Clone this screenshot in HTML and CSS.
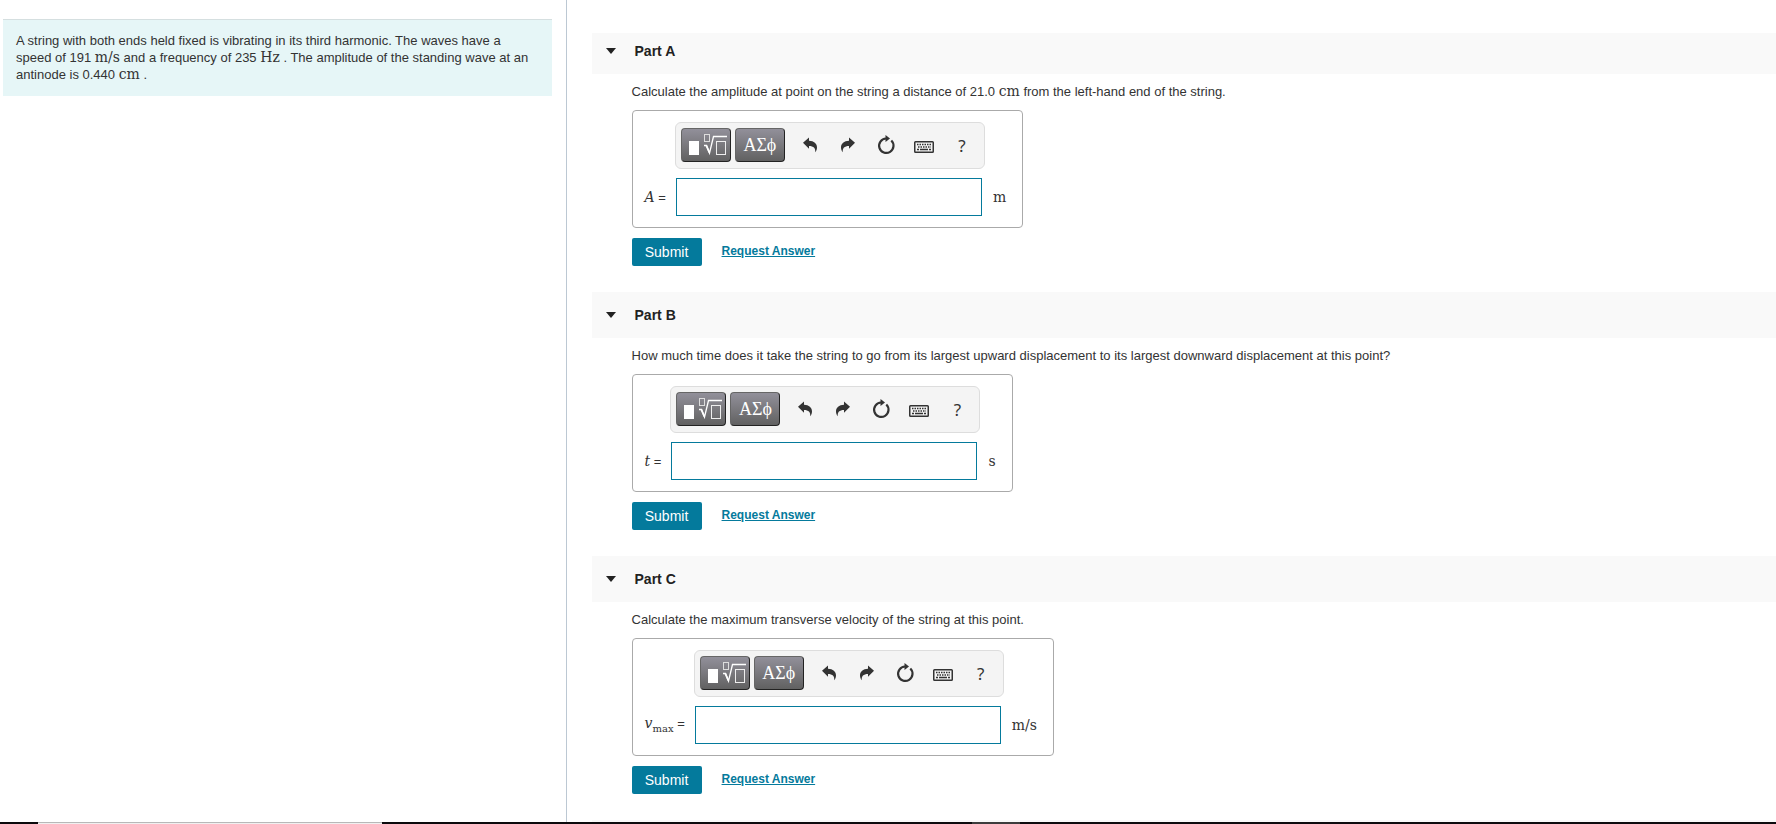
FILE: index.html
```
<!DOCTYPE html>
<html lang="en">
<head>
  <meta charset="UTF-8" />
  <title>Standing Wave on a String</title>
  <meta name="viewport" content="width=device-width, initial-scale=1.0" />
  <link rel="stylesheet" href="styles.css">
</head>
<body>
  <!-- shared toolbar icons -->
  <svg class="sprite" aria-hidden="true">
    <symbol id="icon-template" viewBox="0 0 38 22">
      <rect x="0" y="7" width="10" height="14" fill="#fff"/>
      <rect x="15.500" y="0.500" width="5" height="7" fill="none" stroke="#ddd"/>
      <path d="M15 11.500h2.500l3 7.500L24.500 2.500H38" fill="none" stroke="#fff" stroke-width="1.300"/>
      <path d="M17.300 11.500l3 7" stroke="#fff" stroke-width="1.800"/>
      <rect x="27.500" y="7.500" width="9" height="13" fill="none" stroke="#eee"/>
    </symbol>
    <symbol id="icon-undo" viewBox="0 0 20 20">
      <path d="M3 7.800L9 2.500v3.300c5 .2 8 2.700 8 6.700 0 1.800-.6 3.300-1.800 4.800.5-4.200-1.600-6.300-6.200-6.300v2.800z" fill="#333"/>
    </symbol>
    <symbol id="icon-redo" viewBox="0 0 20 20">
      <path d="M17 7.800L11 2.500v3.300c-5 .2-8 2.700-8 6.700 0 1.800.6 3.300 1.800 4.800-.5-4.200 1.600-6.300 6.200-6.300v2.800z" fill="#333"/>
    </symbol>
    <symbol id="icon-reset" viewBox="0 0 20 20">
      <path d="M15.300 5.500A7.200 7.200 0 1 1 10 3.500" fill="none" stroke="#333" stroke-width="2.200"/>
      <path d="M9.500 0L14 3.500 9.500 7z" fill="#333"/>
    </symbol>
    <symbol id="icon-keyboard" viewBox="0 0 20 20">
      <rect x="0.750" y="6.750" width="18.500" height="10.500" rx="0.800" fill="none" stroke="#333" stroke-width="1.500"/>
      <path d="M3 9.500h14M4 12h13" stroke="#333" stroke-width="1.500" stroke-dasharray="1.500 1"/>
      <path d="M3 14.500h2M6 14.500h8M15 14.500h2" stroke="#333" stroke-width="1.500"/>
    </symbol>
  </svg>

  <div class="page">
    <aside class="intro">
      <p class="problem">A string with both ends held fixed is vibrating in its third harmonic. The waves have a speed of 191 <span class="math">m/s</span> and a frequency of 235 <span class="math">Hz</span> . The amplitude of the standing wave at an antinode is 0.440 <span class="math">cm</span> .</p>
    </aside>

    <main class="parts">
      <section class="part">
        <h2 class="part-header"><button class="toggle" type="button"><span class="caret"></span>Part A</button></h2>
        <form class="part-body">
          <p class="prompt">Calculate the amplitude at point on the string a distance of 21.0 <span class="math">cm</span> from the left-hand end of the string.</p>
          <div class="answer">
            <div class="toolbar">
              <button class="key" type="button" aria-label="Templates"><svg class="template"><use href="#icon-template"/></svg></button>
              <button class="key" type="button">ΑΣϕ</button>
              <button class="tool" type="button" aria-label="Undo"><svg><use href="#icon-undo"/></svg></button>
              <button class="tool" type="button" aria-label="Redo"><svg><use href="#icon-redo"/></svg></button>
              <button class="tool" type="button" aria-label="Reset"><svg><use href="#icon-reset"/></svg></button>
              <button class="tool" type="button" aria-label="Keyboard shortcuts"><svg><use href="#icon-keyboard"/></svg></button>
              <button class="tool" type="button">?</button>
            </div>
            <label for="answer-a"><i class="math">A</i> =</label>
            <input type="text" id="answer-a">
            <span class="unit math">m</span>
          </div>
          <div class="actions">
            <button class="submit" type="submit">Submit</button>
            <a href="#">Request Answer</a>
          </div>
        </form>
      </section>

      <section class="part">
        <h2 class="part-header"><button class="toggle" type="button"><span class="caret"></span>Part B</button></h2>
        <form class="part-body">
          <p class="prompt">How much time does it take the string to go from its largest upward displacement to its largest downward displacement at this point?</p>
          <div class="answer">
            <div class="toolbar">
              <button class="key" type="button" aria-label="Templates"><svg class="template"><use href="#icon-template"/></svg></button>
              <button class="key" type="button">ΑΣϕ</button>
              <button class="tool" type="button" aria-label="Undo"><svg><use href="#icon-undo"/></svg></button>
              <button class="tool" type="button" aria-label="Redo"><svg><use href="#icon-redo"/></svg></button>
              <button class="tool" type="button" aria-label="Reset"><svg><use href="#icon-reset"/></svg></button>
              <button class="tool" type="button" aria-label="Keyboard shortcuts"><svg><use href="#icon-keyboard"/></svg></button>
              <button class="tool" type="button">?</button>
            </div>
            <label for="answer-b"><i class="math">t</i> =</label>
            <input type="text" id="answer-b">
            <span class="unit math">s</span>
          </div>
          <div class="actions">
            <button class="submit" type="submit">Submit</button>
            <a href="#">Request Answer</a>
          </div>
        </form>
      </section>

      <section class="part">
        <h2 class="part-header"><button class="toggle" type="button"><span class="caret"></span>Part C</button></h2>
        <form class="part-body">
          <p class="prompt">Calculate the maximum transverse velocity of the string at this point.</p>
          <div class="answer">
            <div class="toolbar">
              <button class="key" type="button" aria-label="Templates"><svg class="template"><use href="#icon-template"/></svg></button>
              <button class="key" type="button">ΑΣϕ</button>
              <button class="tool" type="button" aria-label="Undo"><svg><use href="#icon-undo"/></svg></button>
              <button class="tool" type="button" aria-label="Redo"><svg><use href="#icon-redo"/></svg></button>
              <button class="tool" type="button" aria-label="Reset"><svg><use href="#icon-reset"/></svg></button>
              <button class="tool" type="button" aria-label="Keyboard shortcuts"><svg><use href="#icon-keyboard"/></svg></button>
              <button class="tool" type="button">?</button>
            </div>
            <label for="answer-c"><i class="math">v</i><sub class="math">max</sub> =</label>
            <input type="text" id="answer-c">
            <span class="unit math">m/s</span>
          </div>
          <div class="actions">
            <button class="submit" type="submit">Submit</button>
            <a href="#">Request Answer</a>
          </div>
        </form>
      </section>

      <div class="part-header"></div>
    </main>
  </div>

  <div class="taskbar">
    <div class="start"></div>
    <div class="search"></div>
    <div class="apps"></div>
    <div class="active"></div>
  </div>
</body>
</html>
```
FILE: styles.css
```
* {
  box-sizing: border-box;
}
body {
  display: flex;
  flex-direction: column;
  height: 100vh;
  margin: 0;
  overflow: hidden;
  background: white;
  color: #333;
  font-family: "Liberation Sans", Arial, sans-serif;
  font-size: 13px;
}
button, input {
  font-family: inherit;
}
.sprite {
  display: none;
}
.page {
  display: flex;
  flex: 1;
  min-height: 0;
}

/* problem statement */
.intro {
  width: 31.9%;
  padding: 19px 14px 0 3px;
  border-right: 1px solid #bcc8d3;
}
.problem {
  margin: 0;
  padding: 12px 20px 13px 13px;
  border-top: 1px solid #d5dfe0;
  background: #e6f6f7;
  line-height: 17px;
}
.math {
  font-family: "DejaVu Serif", serif;
  font-size: 14px;
  line-height: 1;
}

/* parts */
.parts {
  flex: 1;
  padding: 33px 0 0 25px;
  overflow: hidden;
}
.part {
  margin-bottom: 26px;
}
.part-header {
  display: flex;
  align-items: center;
  height: 46px;
  margin: 0;
  padding-left: 14px;
  background: #f9f9f9;
}
.part:first-child .part-header {
  height: 41px;
  padding-bottom: 5px;
}
.toggle {
  display: flex;
  align-items: center;
  gap: 19px;
  padding: 0;
  border: none;
  background: none;
  color: #222;
  font-size: 14px;
  font-weight: bold;
  cursor: pointer;
}
.caret {
  border: 5px solid transparent;
  border-top: 6px solid #222;
  border-bottom: 0;
}
.part-body {
  padding: 9px 0 0 40px;
}
.prompt {
  margin: 0 0 9px;
  line-height: 18px;
}

/* answer box */
.answer {
  display: inline-grid;
  grid-template-columns: auto 310px auto;
  align-items: center;
  row-gap: 9px;
  padding: 11px 16px 11px 12px;
  border: 1px solid #aaa;
  border-radius: 4px;
  vertical-align: top;
}
.toolbar {
  display: flex;
  grid-column: 2;
  align-items: center;
  height: 47px;
  padding: 0 0 1px 5px;
  border: 1px solid #ddd;
  border-radius: 6px;
  background: #f4f4f4;
}
.key {
  width: 50px;
  height: 34px;
  margin-right: 4px;
  padding: 0;
  border: 1px solid #222;
  border-top-color: #666;
  border-left-color: #666;
  border-radius: 4px;
  background: linear-gradient(#92909a, #616161);
  color: white;
  font-family: "Liberation Serif", "Times New Roman", serif;
  font-size: 18px;
  cursor: pointer;
}
.key + .tool {
  margin-left: 2px;
}
.template {
  display: block;
  width: 38px;
  height: 22px;
  margin-left: 7px;
}
.tool {
  display: flex;
  align-items: center;
  justify-content: center;
  width: 38px;
  height: 34px;
  padding: 0;
  border: none;
  background: none;
  color: #333;
  font-family: "Noto Sans", sans-serif;
  font-size: 17px;
  cursor: pointer;
}
.tool svg {
  width: 20px;
  height: 20px;
}
.answer label {
  grid-column: 1;
  padding-right: 9px;
}
.answer sub {
  font-size: 10px;
}
.answer input {
  width: 306px;
  height: 38px;
  margin-left: 1px;
  padding: 0 8px;
  border: 1px solid #047a9c;
  font-size: 16px;
}
.unit {
  padding-left: 8px;
}

.actions {
  display: flex;
  align-items: center;
  gap: 20px;
  margin-top: 10px;
}
.submit {
  width: 70px;
  height: 28px;
  padding: 0;
  border: none;
  border-radius: 2px;
  background: #047a9c;
  color: white;
  font-size: 14px;
  cursor: pointer;
}
.actions a {
  padding-bottom: 3px;
  color: #047a9c;
  font-size: 12px;
  font-weight: bold;
}

/* top edge of the desktop taskbar */
.taskbar {
  display: flex;
  height: 2px;
  background: #0c0a0d;
}
.start {
  width: 38px;
}
.search {
  width: 344px;
  border-top: 1px solid #b8b8b8;
  background: #f0f0f0;
}
.apps {
  width: 590px;
}
.active {
  width: 48px;
  background: #3c3c3c;
}
```
